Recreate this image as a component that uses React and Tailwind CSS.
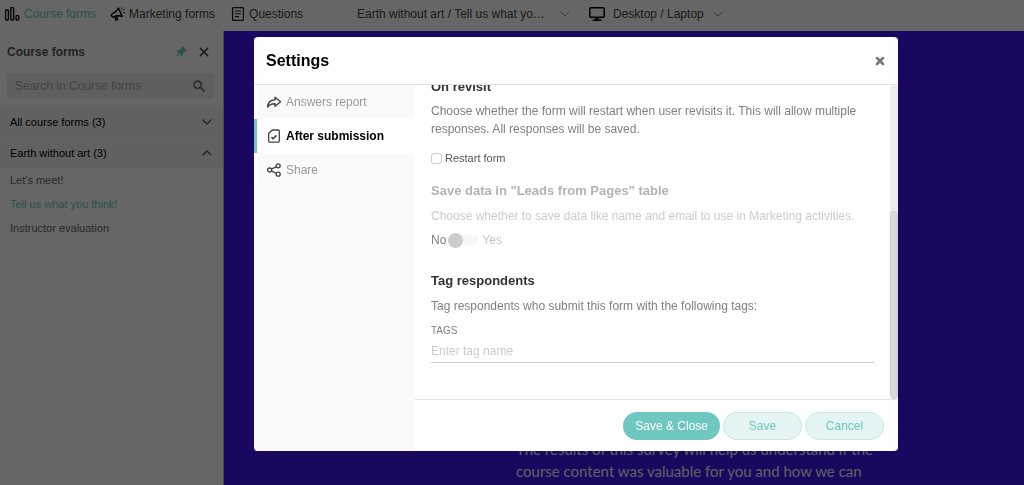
import React, { useState } from "react";
import { ChevronDown, ChevronUp, X } from "lucide-react";

const courseForms = [
  { name: "Let's meet!" },
  { name: "Tell us what you think!", active: true },
  { name: "Instructor evaluation" },
];

const BarsIcon = () => (
  <svg className="w-4 h-4 shrink-0" viewBox="0 0 16 16" fill="none" stroke="currentColor" strokeWidth="1.3">
    <rect x="1.6" y="4" width="2.8" height="10" rx="0.8" />
    <rect x="6.8" y="1.6" width="2.8" height="12.4" rx="0.8" />
    <rect x="12" y="9.6" width="2.8" height="4.4" rx="0.8" />
  </svg>
);

const MegaphoneIcon = () => (
  <svg className="w-4 h-4 shrink-0" viewBox="0 0 16 16" fill="none" stroke="currentColor" strokeWidth="1.4" strokeLinecap="round" strokeLinejoin="round">
    <path d="M8.6 2.2 12.2 10.4C9 9.2 6.5 9.6 3.2 10.8 1.8 11 0.8 9.2 1.8 8.2 5 6.6 7 5.2 8.6 2.2Z" />
    <path d="M4.6 10.6 6 14.2 7.6 13.6 6.6 10.2" />
    <path d="M11.6 3 12 1.8M13 4.6 14.6 3M13.6 6.6 15 6.8" strokeWidth="0.9" />
  </svg>
);

const QuestionsIcon = () => (
  <svg className="w-4 h-4 shrink-0" viewBox="0 0 16 16" fill="none" stroke="currentColor" strokeWidth="1.3">
    <rect x="2.6" y="1.6" width="10.8" height="12.8" rx="0.8" />
    <path d="M5 5H11M5 7.8H11M5 10.6H9" strokeWidth="1.1" />
  </svg>
);

const MonitorIcon = () => (
  <svg className="w-4 h-4 shrink-0" viewBox="0 0 16 16" fill="none" stroke="currentColor" strokeWidth="1.5">
    <rect x="0.8" y="1.7" width="14.4" height="9.6" rx="1" />
    <path d="M8 11.5V13.5" strokeWidth="4" />
    <path d="M3.5 14.2H12.5" />
  </svg>
);

const PinIcon = () => (
  <svg className="w-3 h-3" viewBox="0 0 12 12" fill="currentColor">
    <path d="M7.3 0 12 4.7 11 5.4 10.2 5.2 7.8 7.6 7.8 9.6 6.8 10.4 4.5 8 0.4 11.8 0 11.5 3.8 7.3 1.6 5.2 2.4 4.2 4.4 4.2 6.8 1.8 6.6 0.8Z" />
  </svg>
);

const SearchIcon = () => (
  <svg className="w-3 h-3" viewBox="0 0 12 12" fill="none" stroke="currentColor" strokeWidth="1.8" strokeLinecap="round">
    <circle cx="4.7" cy="4.7" r="3.6" />
    <path d="M7.6 7.6 11 11" />
  </svg>
);

const ShareArrowIcon = () => (
  <svg className="w-4 h-4" viewBox="0 0 16 16" fill="none" stroke="currentColor" strokeWidth="1.4" strokeLinejoin="round">
    <path d="M9 3.2 14.6 7.8 9 12.2V9.8C5.5 9.6 3.4 10.6 1.6 13 1.8 8.8 4.3 6.1 9 5.7Z" />
  </svg>
);

const CheckedPageIcon = () => (
  <svg className="w-4 h-4" viewBox="0 0 16 16" fill="none" stroke="currentColor" strokeWidth="1.3" strokeLinejoin="round">
    <path d="M6.2 2H12.3Q13.3 2 13.3 3V13.1Q13.3 14.1 12.3 14.1H3.7Q2.7 14.1 2.7 13.1V5.5Z" />
    <path d="M5.5 9.2 7.2 10.8 10.5 7.4" strokeWidth="1.6" />
  </svg>
);

const ShareNodesIcon = () => (
  <svg className="w-4 h-4" viewBox="0 0 16 16" fill="none" stroke="currentColor" strokeWidth="1.3">
    <circle cx="3.6" cy="8" r="2" />
    <circle cx="12.2" cy="3.8" r="2" />
    <circle cx="12.2" cy="12.2" r="2" />
    <path d="M5.4 7.1 10.4 4.7M5.4 8.9 10.4 11.3" />
  </svg>
);

const settingsTabs = [
  { name: "Answers report", icon: ShareArrowIcon },
  { name: "After submission", icon: CheckedPageIcon },
  { name: "Share", icon: ShareNodesIcon },
];

const TopBar = () => (
  <header className="h-[31px] shrink-0 flex items-center pl-1 pb-1 bg-white text-xs text-[#444] whitespace-nowrap shadow">
    <nav className="flex items-center w-[353px]">
      <a href="#course" className="flex items-center gap-1 text-[#6fc8c0]">
        <span className="text-black"><BarsIcon /></span>
        Course forms
      </a>
      <a href="#marketing" className="flex items-center gap-[3px] ml-[14px]">
        <span className="text-black"><MegaphoneIcon /></span>
        Marketing forms
      </a>
      <a href="#questions" className="flex items-center gap-[3px] ml-[15px]">
        <span className="text-[#222]"><QuestionsIcon /></span>
        Questions
      </a>
    </nav>
    <button className="flex items-center justify-between w-[216px]">
      Earth without art / Tell us what yo…
      <ChevronDown className="w-4 h-4 text-[#999]" strokeWidth={1.5} />
    </button>
    <button className="flex items-center ml-4">
      <span className="text-black mr-2"><MonitorIcon /></span>
      Desktop / Laptop
      <ChevronDown className="w-4 h-4 ml-[6px] text-[#999]" strokeWidth={1.5} />
    </button>
  </header>
);

const Sidebar = () => (
  <aside className="w-[224px] shrink-0 bg-white border-r border-[#bbb] text-[11px] text-[#666]">
    <div className="flex items-center h-[42px] pl-[7px] pr-3">
      <h2 className="flex-1 text-xs font-bold text-[#555]">Course forms</h2>
      <button aria-label="Pin" className="text-[#6fc8c0]"><PinIcon /></button>
      <button aria-label="Close panel" className="ml-[10px] text-[#444]"><X className="w-[14px] h-[14px]" strokeWidth={3} /></button>
    </div>
    <div className="flex items-center h-[26px] ml-[7px] mr-2 pl-2 pr-[10px] rounded bg-[#eee] text-[#777]">
      <input aria-label="Search" placeholder="Search in Course forms" className="flex-1 min-w-0 text-xs outline-none placeholder:text-[#aaa]" />
      <SearchIcon />
    </div>
    <button className="flex items-center justify-between w-full h-[30px] mt-2 pl-[10px] pr-2 bg-[#f3f3f3] text-black">
      All course forms (3)
      <ChevronDown className="w-4 h-4 text-[#555]" />
    </button>
    <button className="flex items-center justify-between w-full h-[30px] mt-px pl-[10px] pr-2 bg-[#f3f3f3] text-black">
      Earth without art (3)
      <ChevronUp className="w-4 h-4 text-[#555]" />
    </button>
    <ul>
      {courseForms.map((form) => (
        <li key={form.name} className="h-6 pl-[10px] leading-6">
          <a href="#form" className={form.active ? "text-[#6fc8c0]" : "text-[#666]"}>{form.name}</a>
        </li>
      ))}
    </ul>
  </aside>
);

const SettingsModal = () => {
  const [tab, setTab] = useState("After submission");
  const [restart, setRestart] = useState(false);

  return (
    <div role="dialog" aria-label="Settings" className="flex flex-col w-full h-full rounded bg-white overflow-hidden">
      <div className="flex items-center justify-between h-12 shrink-0 px-3 border-b border-[#e3e3e3]">
        <h1 className="text-base font-bold text-black">Settings</h1>
        <button aria-label="Close" className="text-[#777]"><X className="w-3 h-3" strokeWidth={5} /></button>
      </div>

      <div className="flex flex-1 min-h-0">
        <nav className="w-[161px] shrink-0 bg-[#fafafa]">
          {settingsTabs.map(({ name, icon: Icon }) => (
            <button
              key={name}
              onClick={() => setTab(name)}
              className={`flex items-center gap-1 w-full h-[34px] pl-[9px] border-l-[3px] text-xs ${
                tab === name ? "border-[#6fc8c0] bg-white font-bold text-black" : "border-white text-[#999]"
              }`}
            >
              <span className="text-[#444]"><Icon /></span>
              {name}
            </button>
          ))}
        </nav>

        <div className="flex flex-col flex-1 min-w-0">
          <div className="flex flex-1 min-h-0 border-b border-[#e3e3e3]">
            <div className="flex flex-col justify-end flex-1 overflow-hidden pl-4 pr-4 pb-9 text-xs leading-[18px] text-[#808080]">
              <h2 className="text-[13px] leading-5 font-bold text-[#333]">On revisit</h2>
              <p className="mt-[5px]">
                Choose whether the form will restart when user revisits it. This will allow multiple responses. All
                responses will be saved.
              </p>
              <label className="flex items-center gap-[3px] h-5 mt-[11px] text-[11px] text-[#555]">
                <input
                  type="checkbox"
                  checked={restart}
                  onChange={(e) => setRestart(e.target.checked)}
                  className="appearance-none w-[11px] h-[11px] border border-[#ccc] rounded-[3px] checked:bg-[#6fc8c0]"
                />
                Restart form
              </label>

              <h2 className="mt-[14px] text-[13px] leading-5 font-bold text-[#b3b3b3]">Save data in "Leads from Pages" table</h2>
              <p className="mt-[6px] text-[#ccc]">
                Choose whether to save data like name and email to use in Marketing activities.
              </p>
              <label className="flex items-center mt-[6px]">
                No
                <input type="checkbox" role="switch" disabled className="peer sr-only" />
                <span className="flex items-center w-[30px] h-[10px] ml-[2px] mr-1 rounded-full bg-[#f7f7f7]">
                  <span className="w-[15px] h-[15px] rounded-full bg-[#ccc]" />
                </span>
                <span className="text-[#c4c4c4]">Yes</span>
              </label>

              <h2 className="mt-[22px] text-[13px] leading-5 font-bold text-[#333]">Tag respondents</h2>
              <p className="mt-[6px]">Tag respondents who submit this form with the following tags:</p>
              <label htmlFor="tags" className="mt-[7px] text-[10px]">TAGS</label>
              <input
                id="tags"
                placeholder="Enter tag name"
                className="h-[23px] shrink-0 border-b border-[#ccc] outline-none placeholder:text-[#ccc]"
              />
            </div>
            <div className="flex flex-col justify-end w-2 rounded-full bg-[#ededed]">
              <div className="h-3/5 rounded-full bg-[#dadada] border border-[#cfcfcf]" />
            </div>
          </div>

          <div className="flex items-center justify-end gap-[3px] h-[51px] shrink-0 pr-[14px] text-xs text-[#6fc8c0]">
            <button className="h-7 px-3 rounded-full bg-[#6fc8c0] text-white">Save &amp; Close</button>
            <button className="w-[79px] h-7 rounded-full bg-[#e5f5f4] border border-[#c3e8e5]">Save</button>
            <button className="w-[79px] h-7 rounded-full bg-[#e5f5f4] border border-[#c3e8e5]">Cancel</button>
          </div>
        </div>
      </div>
    </div>
  );
};

const App = () => {
  return (
    <div className="h-screen flex flex-col overflow-hidden font-['Liberation_Sans',Arial,sans-serif]">
      <TopBar />
      <div className="flex flex-1 min-h-0">
        <Sidebar />
        <main className="flex flex-col justify-end flex-1 bg-[#4114f0] pl-[292px] pb-[3px] overflow-hidden">
          <p className="w-[370px] font-[Lato,sans-serif] text-[15px] leading-[22px] text-[#eee]">
            The results of this survey will help us understand if the course content was valuable for you and how we can
          </p>
        </main>
      </div>

      {/* Backdrop + settings dialog */}
      <div className="fixed inset-0 bg-black/60 pt-[37px] pb-[34px] pl-[254px] pr-[126px]">
        <SettingsModal />
      </div>
    </div>
  );
};

export default App;
